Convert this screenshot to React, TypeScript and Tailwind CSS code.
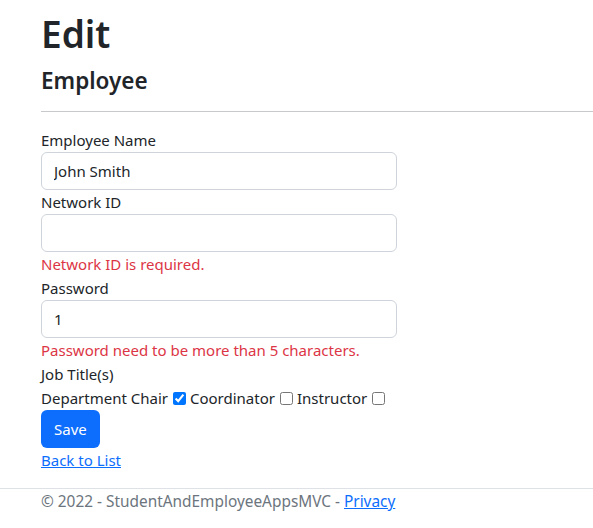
import React, { useState } from 'react';

const font = { fontFamily: '"Segoe UI", "Noto Sans", "Liberation Sans", sans-serif' };

const Field: React.FC<{ label: string; value: string; error?: string }> = ({ label, value, error }) => {
    const [text, setText] = useState(value);
    return (
        <div>
            <label className="block h-6 leading-6">{label}</label>
            <input
                type="text"
                value={text}
                onChange={(e) => setText(e.target.value)}
                className="block w-full h-[38px] px-3 border border-[#ced4da] rounded-[6px] bg-white text-[#212529] text-[15px] leading-6 focus:outline-none"
            />
            {error && <span className="block h-6 leading-6 text-[#dc3545]">{error}</span>}
        </div>
    );
};

export default function App() {
    const [titles, setTitles] = useState({ chair: true, coord: false, instr: false });

    return (
        <div className="min-h-[528px] bg-white text-[#212529] text-[15px]" style={font}>
            <main className="pl-[41px] pb-4">
                <h1 className="pt-[10px] text-[37px] leading-[48px] font-semibold mb-2">Edit</h1>
                <h4 className="text-[22.5px] leading-[29px] font-semibold mb-2">Employee</h4>
                <hr className="my-4 border-0 border-t border-[#c8c9ca]" />
                <div className="w-[356px]">
                    <Field label="Employee Name" value="John Smith" />
                    <Field label="Network ID" value="" error="Network ID is required." />
                    <Field label="Password" value="1" error="Password need to be more than 5 characters." />
                    <label className="block h-6 leading-6">Job Title(s)</label>
                    <div className="h-6 leading-6 whitespace-nowrap">
                        Department Chair
                        <input
                            type="checkbox"
                            checked={titles.chair}
                            onChange={() => setTitles({ ...titles, chair: !titles.chair })}
                            className="align-[-1px] w-[13px] h-[13px] ml-[5px] mr-[4px]"
                        />
                        Coordinator
                        <input
                            type="checkbox"
                            checked={titles.coord}
                            onChange={() => setTitles({ ...titles, coord: !titles.coord })}
                            className="align-[-1px] w-[13px] h-[13px] ml-[5px] mr-[4px]"
                        />
                        Instructor
                        <input
                            type="checkbox"
                            checked={titles.instr}
                            onChange={() => setTitles({ ...titles, instr: !titles.instr })}
                            className="align-[-1px] w-[13px] h-[13px] ml-[5px] mr-[4px]"
                        />
                    </div>
                    <button className="h-[38px] px-[13px] rounded-[6px] bg-[#0d6efd] text-white leading-6">Save</button>
                    <div className="h-6 leading-6">
                        <a href="#" className="text-[#0d6efd] underline">Back to List</a>
                    </div>
                </div>
            </main>
            <footer className="border-t border-[#dee2e6] pl-[41px] leading-6 pt-px text-[15.4px] text-[#6c757d]">
                © 2022 - StudentAndEmployeeAppsMVC - <a href="#" className="text-[#0d6efd] underline">Privacy</a>
            </footer>
        </div>
    );
}
